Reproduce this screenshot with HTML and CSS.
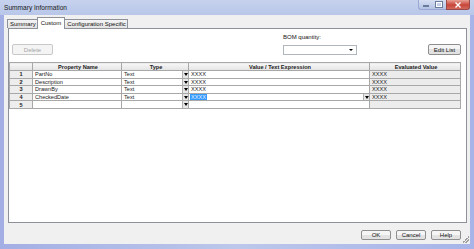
FILE: index.html
```html
<!DOCTYPE html>
<html lang="en">
<head>
    <meta charset="UTF-8">
    <title>Summary Information</title>
    <link rel="stylesheet" href="styles.css">
</head>
<body>
    <div class="window">
        <div class="titlebar">
            <span class="title">Summary Information</span>
            <div class="controls">
                <span class="ctl min"><span class="dash"></span></span>
                <span class="ctl max"><span class="box"></span></span>
                <span class="ctl close">
                    <svg width="8" height="6" viewBox="0 0 8 6"><path d="M1.5 0.5 L6.5 5.5 M6.5 0.5 L1.5 5.5" stroke="#fff" stroke-width="1.4"/></svg>
                </span>
            </div>
        </div>

        <div class="client">
            <div class="tabs">
                <div class="tab">Summary</div>
                <div class="tab active">Custom</div>
                <div class="tab">Configuration Specific</div>
            </div>

            <div class="panel">
                <div class="toolbar">
                    <button class="btn disabled">Delete</button>
                    <div class="bom">
                        <label>BOM quantity:</label>
                        <div class="combo"><span class="tri"></span></div>
                    </div>
                    <button class="btn edit">Edit List</button>
                </div>

                <table class="grid">
                    <colgroup>
                        <col style="width:23px">
                        <col style="width:89px">
                        <col style="width:67px">
                        <col style="width:181px">
                        <col style="width:91px">
                    </colgroup>
                    <tr class="head">
                        <th></th>
                        <th>Property Name</th>
                        <th>Type</th>
                        <th>Value / Text Expression</th>
                        <th>Evaluated Value</th>
                    </tr>
                    <tr>
                        <td class="num">1</td>
                        <td>PartNo</td>
                        <td class="type">Text<span class="drop"></span></td>
                        <td>XXXX</td>
                        <td class="eval">XXXX</td>
                    </tr>
                    <tr>
                        <td class="num">2</td>
                        <td>Description</td>
                        <td class="type">Text<span class="drop"></span></td>
                        <td>XXXX</td>
                        <td class="eval">XXXX</td>
                    </tr>
                    <tr>
                        <td class="num">3</td>
                        <td>DrawnBy</td>
                        <td class="type">Text<span class="drop"></span></td>
                        <td>XXXX</td>
                        <td class="eval">XXXX</td>
                    </tr>
                    <tr>
                        <td class="num">4</td>
                        <td>CheckedDate</td>
                        <td class="type">Text<span class="drop"></span></td>
                        <td class="type"><span class="sel">XXXX</span><span class="drop"></span></td>
                        <td class="eval">XXXX</td>
                    </tr>
                    <tr>
                        <td class="num">5</td>
                        <td></td>
                        <td class="type"><span class="drop"></span></td>
                        <td></td>
                        <td class="eval"></td>
                    </tr>
                </table>
            </div>

            <div class="footer">
                <button class="btn">OK</button>
                <button class="btn">Cancel</button>
                <button class="btn">Help</button>
                <span class="grip"></span>
            </div>
        </div>
    </div>
</body>
</html>
```

FILE: styles.css
```css
body, html {
    margin: 0;
    padding: 0;
    font-family: "Liberation Sans", Arial, sans-serif;
    background-color: #fff;
}

.window {
    width: 474px;
    height: 249px;
    display: flex;
    flex-direction: column;
    background: linear-gradient(to right, #a3afe4, #bcc7eb 50%, #a6b4e8);
    box-sizing: border-box;
}

.titlebar {
    height: 15px;
    display: flex;
    justify-content: space-between;
    align-items: flex-start;
    background: linear-gradient(#c6d2ed, #b8c6e9);
}

.title {
    font-size: 6.6px;
    line-height: 15px;
    padding-left: 4px;
    color: #1a1a1a;
}

.controls {
    display: flex;
    margin-right: 4px;
}

.ctl {
    height: 10px;
    display: flex;
    align-items: center;
    justify-content: center;
    box-sizing: border-box;
}

.min, .max {
    width: 14px;
    background: linear-gradient(#d6def2, #b4c2e4);
    border-bottom: 1px solid #9aa7d2;
}

.min {
    border-left: 1px solid #9aa7d2;
    border-radius: 0 0 0 3px;
}

.dash {
    width: 6px;
    height: 2px;
    margin-top: 3px;
    background: #fff;
    border: 1px solid #6a7a9a;
    box-sizing: border-box;
}

.box {
    width: 6px;
    height: 5px;
    border: 1px solid #fff;
    outline: 1px solid #6a7a9a;
    box-sizing: border-box;
}

.close {
    width: 24px;
    background: linear-gradient(#e8a094, #c8453a 55%, #d26a5c);
    border: 1px solid #9a4848;
    border-top: none;
    border-radius: 0 0 3px 0;
}

.client {
    flex: 1;
    margin: 0 4px 5px 4px;
    background-color: #f0f0f0;
    display: flex;
    flex-direction: column;
    padding-top: 2px;
}

.tabs {
    display: flex;
    align-items: flex-end;
    height: 11px;
    padding-left: 3px;
    position: relative;
    z-index: 1;
}

.tab {
    font-size: 6px;
    height: 9px;
    line-height: 9px;
    padding: 0 1px 0 2px;
    border: 1px solid #8e9199;
    border-bottom: none;
    border-right: none;
    background: linear-gradient(#f4f4f4, #e2e2e2);
    box-sizing: border-box;
    color: #111;
}

.tab:last-child {
    border-right: 1px solid #8e9199;
}

.tab.active {
    height: 12px;
    line-height: 10px;
    background: #fff;
    border-right: 1px solid #8e9199;
    margin-bottom: -1px;
    padding: 0 3px;
}

.tab.active + .tab {
    border-left: none;
}

.panel {
    flex: 1;
    margin: 0 3px 0 4px;
    background-color: #fff;
    border: 1px solid #8e9199;
}

.toolbar {
    display: flex;
    align-items: flex-end;
    height: 33px;
    box-sizing: border-box;
    padding: 0 5px 7px 3px;
}

.btn {
    font-family: "Liberation Sans", Arial, sans-serif;
    font-size: 6px;
    height: 11px;
    padding: 0;
    border: 1px solid #8f8f8f;
    border-radius: 2px;
    background: linear-gradient(#f5f5f5 50%, #e2e2e2 50%);
    color: #111;
}

.btn.disabled {
    width: 41px;
    border-color: #c8c8c8;
    background: #f4f4f4;
    color: #a6a6a6;
}

.btn.edit {
    width: 33px;
}

.bom {
    margin-left: auto;
    margin-right: 71px;
    display: flex;
    flex-direction: column;
    gap: 5px;
}

.bom label {
    font-size: 6px;
    line-height: 6px;
    color: #111;
}

.combo {
    width: 74px;
    height: 10px;
    border: 1px solid #b0b6be;
    box-sizing: border-box;
    background: #fff;
    display: flex;
    justify-content: flex-end;
    align-items: center;
    padding-right: 3px;
}

.tri {
    width: 0;
    height: 0;
    border-left: 2px solid transparent;
    border-right: 2px solid transparent;
    border-top: 2px solid #000;
}

.grid {
    border-collapse: collapse;
    table-layout: fixed;
    width: 451px;
    font-size: 5.6px;
    border: 1px solid #8a8a8a;
}

.grid th, .grid td {
    border: 1px solid #a8a8a8;
    padding: 0 0 0 2px;
    height: 6.6px;
    line-height: 6px;
    white-space: nowrap;
    overflow: hidden;
    color: #222;
}

.grid th {
    height: 7px;
    font-weight: bold;
    text-align: center;
    background: linear-gradient(#f7f7f7, #e3e3e3);
}

.grid td.num {
    font-weight: bold;
    text-align: center;
    padding: 0;
    background: #ededed;
}

.grid td.type {
    position: relative;
}

.grid td.eval {
    background: #ececec;
}

.drop {
    position: absolute;
    right: 0;
    top: 0;
    width: 6px;
    height: 100%;
    background: #e6e6e6;
    border-left: 1px solid #b0b0b0;
    box-sizing: border-box;
}

.drop::after {
    content: "";
    position: absolute;
    left: 1px;
    top: 2px;
    border-left: 2px solid transparent;
    border-right: 2px solid transparent;
    border-top: 3px solid #000;
}

.sel {
    background: #3399ff;
    color: #e8f2ff;
    padding: 0 1px;
    margin-left: -1px;
}

.footer {
    height: 21px;
    display: flex;
    justify-content: flex-end;
    align-items: flex-start;
    gap: 5px;
    padding: 7px 9px 0 0;
    box-sizing: border-box;
    position: relative;
}

.footer .btn {
    width: 30px;
    height: 10px;
}

.grip {
    position: absolute;
    right: 1px;
    bottom: 1px;
    width: 7px;
    height: 7px;
    background: linear-gradient(135deg, transparent 50%, #a0a0a0 50%, #a0a0a0 60%, transparent 60%, transparent 70%, #a0a0a0 70%, #a0a0a0 80%, transparent 80%);
}
```
